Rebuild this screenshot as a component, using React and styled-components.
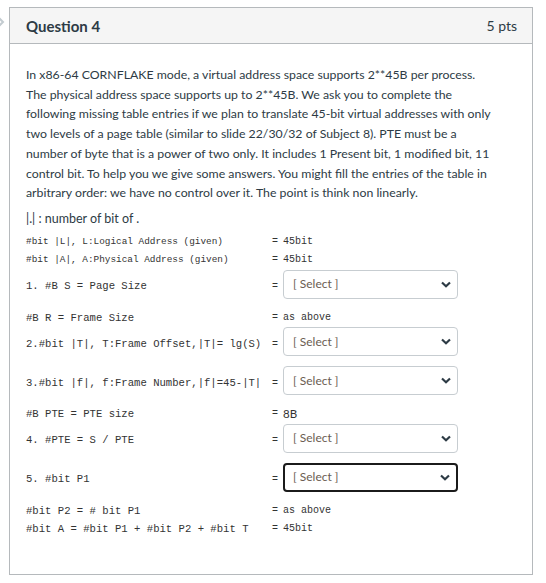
import styled, { createGlobalStyle } from "styled-components";

const GlobalStyle = createGlobalStyle`
  html, body {
    margin: 0;
    padding: 0;
    background: #ffffff;
  }
  body {
    font-family: Lato, "Noto Sans", sans-serif;
    color: #2d3b45;
  }
`;

const rows = [
  { label: "#bit |L|, L:Logical Address (given)", value: "45bit", small: true },
  { label: "#bit |A|, A:Physical Address (given)", value: "45bit", small: true },
  { label: "1. #B S = Page Size", select: true },
  { label: "#B R = Frame Size", value: "as above" },
  { label: "2.#bit |T|, T:Frame Offset,|T|= lg(S)", select: true },
  { label: "3.#bit |f|, f:Frame Number,|f|=45-|T|", select: true },
  { label: "#B PTE = PTE size", value: "8B", sans: true },
  { label: "4. #PTE = S / PTE", select: true },
  { label: "5. #bit P1", select: true, focused: true },
  { label: "#bit P2 = # bit P1", value: "as above" },
  { label: "#bit A = #bit P1 + #bit P2 + #bit T", value: "45bit" },
];

function Chevron() {
  return (
    <svg width="10" height="7" viewBox="0 0 10 7">
      <path d="M1 1.5 L5 5.2 L9 1.5" fill="none" stroke="#2d3b45" strokeWidth="2.2" />
    </svg>
  );
}

function SelectBox({ focused }) {
  return (
    <Select $focused={focused}>
      <span className="placeholder">[ Select ]</span>
      <Chevron />
    </Select>
  );
}

export default function App() {
  return (
    <Page>
      <GlobalStyle />
      <Bookmark width="6" height="12" viewBox="0 0 6 12">
        <path d="M-2 1 L3 6 L-2 11" fill="none" stroke="#c3cbd0" strokeWidth="2" />
      </Bookmark>
      <Card>
        <Header>
          <Title>Question 4</Title>
          <Points>5 pts</Points>
        </Header>
        <Body>
          <Paragraph>
            In x86-64 CORNFLAKE mode, a virtual address space supports 2**45B per process.
            The physical address space supports up to 2**45B. We ask you to complete the
            following missing table entries if we plan to translate 45-bit virtual addresses with only
            two levels of a page table (similar to slide 22/30/32 of Subject 8). PTE must be a
            number of byte that is a power of two only. It includes 1 Present bit, 1 modified bit, 11
            control bit. To help you we give some answers. You might fill the entries of the table in
            arbitrary order: we have no control over it. The point is think non linearly.
          </Paragraph>
          <Legend>|.| : number of bit of .</Legend>
          <AnswerTable>
            <tbody>
              {rows.map((row) => (
                <Row key={row.label} $select={row.select}>
                  <LabelCell $select={row.select} $small={row.small}>
                    {row.label}
                  </LabelCell>
                  <ValueCell>
                    <ValueLine>
                      <Equals $select={row.select}>=</Equals>
                      {row.select ? (
                        <SelectBox focused={row.focused} />
                      ) : (
                        <Value $sans={row.sans}>{row.value}</Value>
                      )}
                    </ValueLine>
                  </ValueCell>
                </Row>
              ))}
            </tbody>
          </AnswerTable>
        </Body>
      </Card>
    </Page>
  );
}

const mono = '"Liberation Mono", "Courier New", monospace';

const Page = styled.div`
  position: relative;
  padding: 7px 14px 9px 9px;
`;

const Bookmark = styled.svg`
  position: absolute;
  left: 0;
  top: 16px;
`;

const Card = styled.div`
  border: 1px solid #b5b9bc;
  background: #fff;
  width: 522px;
`;

const Header = styled.div`
  display: flex;
  justify-content: space-between;
  align-items: center;
  height: 35px;
  padding: 0 15px 0 16px;
  background: #f5f5f5;
  border-bottom: 1px solid #b5b9bc;
`;

const Title = styled.span`
  font-size: 15px;
  font-weight: 700;
`;

const Points = styled.span`
  font-size: 14px;
`;

const Body = styled.div`
  padding: 21px 16px 35px 16px;
`;

const Paragraph = styled.p`
  margin: 0;
  max-width: 472px;
  font-size: 12.3px;
  line-height: 19.7px;
`;

const Legend = styled.p`
  margin: 6px 0 0 0;
  font-size: 12.5px;
  line-height: 20px;
`;

const AnswerTable = styled.table`
  border-collapse: collapse;
  margin-top: 4px;
`;

const Row = styled.tr`
  height: ${(p) => (p.$select ? "39px" : "18.5px")};
`;

const LabelCell = styled.td`
  padding: ${(p) => (p.$select ? "7.5px 0 0 0" : "0")};
  width: 246px;
  font-family: ${mono};
  font-size: ${(p) => (p.$small ? "9.4px" : "10.6px")};
  line-height: ${(p) => (p.$select ? "19px" : "18.5px")};
  color: #333;
  white-space: pre;
  vertical-align: top;
`;

const ValueCell = styled.td`
  padding: 0;
  vertical-align: top;
`;

const ValueLine = styled.div`
  display: flex;
  align-items: flex-start;
  font-family: ${mono};
  font-size: 10px;
  line-height: 18.5px;
  color: #333;
`;

const Equals = styled.span`
  width: 11px;
  padding-top: ${(p) => (p.$select ? "7.5px" : "0")};
  line-height: ${(p) => (p.$select ? "19px" : "18.5px")};
`;

const Value = styled.span`
  font-family: ${(p) => (p.$sans ? 'Lato, "Noto Sans", sans-serif' : mono)};
  font-size: ${(p) => (p.$sans ? "11.5px" : "10px")};
`;

const Select = styled.div`
  box-sizing: border-box;
  width: 175px;
  height: 29px;
  display: flex;
  align-items: center;
  justify-content: space-between;
  padding: 0 6px 0 ${(p) => (p.$focused ? "8px" : "9px")};
  border: ${(p) => (p.$focused ? "2px solid #1b1b1b" : "1px solid #c7cdd1")};
  border-radius: 4px;
  background: #fff;

  .placeholder {
    font-family: Lato, "Noto Sans", sans-serif;
    font-size: 12px;
    color: #6b5d52;
  }
`;
